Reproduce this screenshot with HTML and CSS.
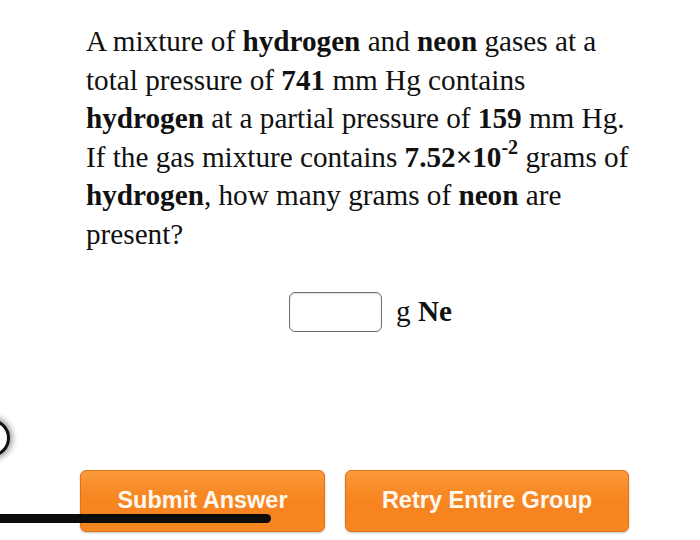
FILE: index.html
```html
<!DOCTYPE html>
<html>
<head>
<meta charset="utf-8">
<link rel="stylesheet" href="styles.css">
</head>
<body>
<div class="page">
  <p class="question">A mixture of <b>hydrogen</b> and <b>neon</b> gases at a<br>total pressure of <b>741</b> mm Hg contains<br><b>hydrogen</b> at a partial pressure of <b>159</b> mm Hg.<br>If the gas mixture contains <b>7.52&times;10<sup>-2</sup></b> grams of<br><b>hydrogen</b>, how many grams of <b>neon</b> are<br>present?</p>
  <div class="answer">
    <span class="input"></span>
    <span class="unit">g <b>Ne</b></span>
  </div>
  <div class="buttons">
    <button class="btn btn-submit">Submit Answer</button>
    <button class="btn btn-retry">Retry Entire Group</button>
  </div>
</div>
<div class="knob"></div>
<div class="scrubber"></div>
</body>
</html>
```
FILE: styles.css
```css
html, body {
  margin: 0;
  padding: 0;
  background: #ffffff;
}
body {
  width: 700px;
  height: 540px;
  overflow: hidden;
  position: relative;
}
.page {
  padding: 22px 0 0 86px;
  width: 580px;
}
.question {
  margin: 0;
  font-family: "Liberation Serif", "Times New Roman", serif;
  font-size: 29.2px;
  line-height: 38.6px;
  color: #111;
  white-space: nowrap;
}
.question sup {
  font-size: 20px;
  line-height: 0;
  vertical-align: 13px;
}
.answer {
  display: flex;
  align-items: center;
  margin: 38px 0 0 203px;
  gap: 14px;
}
.input {
  display: block;
  width: 93px;
  height: 40px;
  border: 1.5px solid #6d6d6d;
  border-radius: 6px;
  box-sizing: border-box;
  box-shadow: inset 0 1px 2px rgba(0,0,0,0.12);
}
.unit {
  font-family: "Liberation Serif", "Times New Roman", serif;
  font-size: 29.2px;
  color: #111;
}
.buttons {
  display: flex;
  gap: 20px;
  margin: 138px 0 0 -6px;
}
.btn {
  height: 62px;
  border: 1px solid #e0731a;
  border-radius: 6px;
  background: linear-gradient(#fb9a3c 0%, #f78a25 35%, #f68320 60%, #f7871f 100%);
  color: #fff8ef;
  font-family: "Liberation Sans", Arial, sans-serif;
  font-weight: bold;
  font-size: 23.5px;
  box-shadow: 0 1px 2px rgba(0,0,0,0.25);
  padding: 0;
}
.btn-submit { width: 245px; }
.btn-retry { width: 284px; }
.knob {
  position: absolute;
  left: -28px;
  top: 419px;
  width: 32px;
  height: 32px;
  border-radius: 50%;
  background: #fff;
  border: 3px solid #111;
  box-shadow: 0 0 6px 2px rgba(0,0,0,0.45);
}
.scrubber {
  position: absolute;
  left: -10px;
  top: 514px;
  width: 281px;
  height: 9px;
  border-radius: 5px;
  background: #0c0c0c;
}
```
